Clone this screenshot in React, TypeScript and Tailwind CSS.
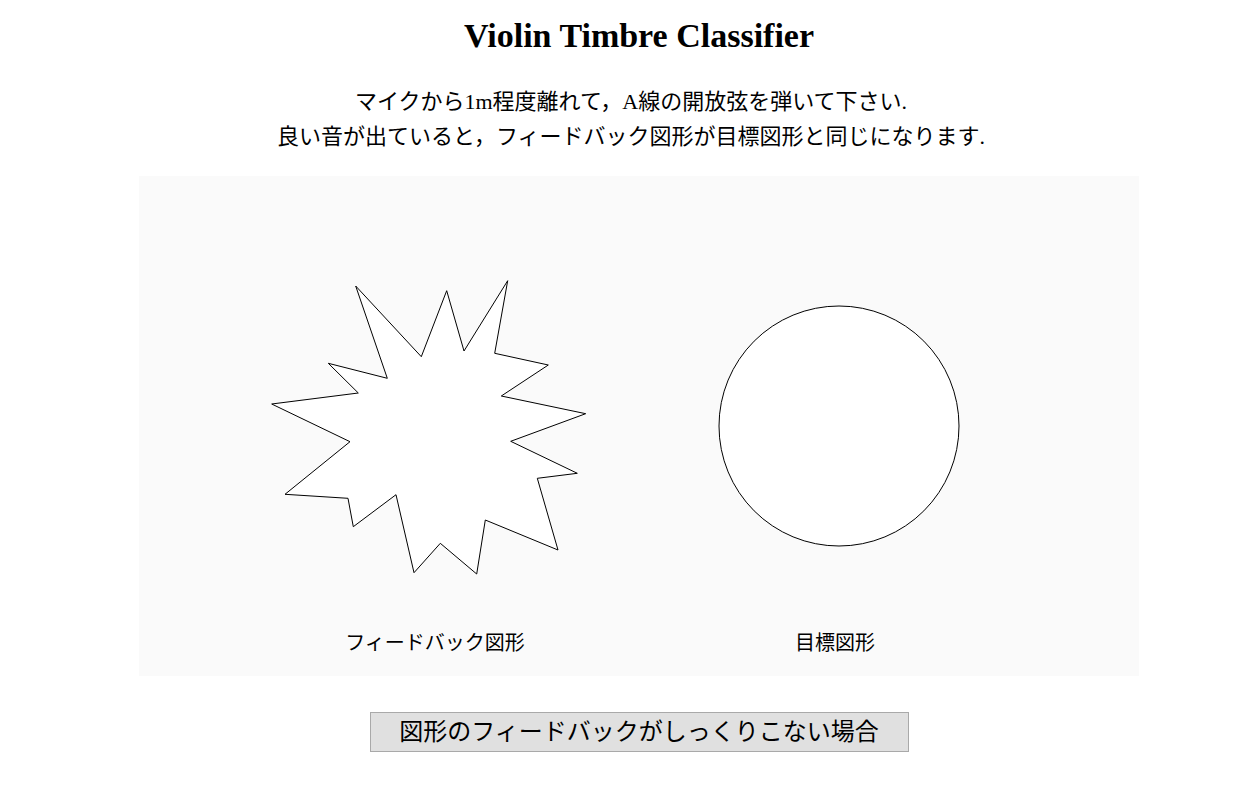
const starPoints = [
  [116.7, 60], [182.3, 130.7], [207.7, 64.7], [225, 125], [268.7, 54.7],
  [255.7, 127.3], [309.3, 139], [262.3, 170], [346.7, 187.7], [271.7, 215.3],
  [338.3, 247.3], [298.3, 252.3], [319, 324], [246.3, 294], [237.7, 348],
  [201.3, 317.3], [175, 346.7], [157, 268.7], [114.3, 300.7], [109, 272.3],
  [46, 268.3], [111, 215.7], [32.7, 178], [119.3, 167], [89.3, 137.3],
  [148.3, 152.3],
]
  .map(([x, y]) => `${x},${y}`)
  .join(" ");

function ShapeColumn({ label, children }: { label: string; children: React.ReactNode }) {
  return (
    <div className="flex w-[400px] flex-col items-center">
      <svg width="400" height="400" viewBox="0 0 400 400">
        {children}
      </svg>
      <div className="mt-[2px] pr-2 text-[20px] leading-[28px] text-black [font-family:'Noto_Sans_CJK_JP',sans-serif] font-normal">
        {label}
      </div>
    </div>
  );
}

export default function App() {
  return (
    <div className="min-h-screen w-full bg-white pl-6 text-black">
      <div className="flex flex-col items-center pt-4">
        <h1 className="h-10 text-[34px] font-bold leading-10 [font-family:'Liberation_Serif','Noto_Sans_CJK_JP',serif]">
          Violin Timbre Classifier
        </h1>
        <div className="mt-[28px] pr-4 text-center text-[22px] leading-[35px] [font-family:'Liberation_Serif','Noto_Sans_CJK_JP',serif]">
          <p>マイクから1m程度離れて，A線の開放弦を弾いて下さい.</p>
          <p>良い音が出ていると，フィードバック図形が目標図形と同じになります.</p>
        </div>
        <div className="mt-[22px] flex h-[500px] w-[1000px] justify-center bg-[#fafafa] pt-[50px]">
          <ShapeColumn label="フィードバック図形">
            <polygon points={starPoints} fill="#ffffff" stroke="#000000" strokeWidth="1" strokeLinejoin="miter" />
          </ShapeColumn>
          <ShapeColumn label="目標図形">
            <circle cx="200" cy="200" r="120" fill="#ffffff" stroke="#000000" strokeWidth="1" />
          </ShapeColumn>
        </div>
        <button className="mt-[36px] h-[40px] w-[539px] border border-[#a9a9a9] bg-[#e0e0e0] pb-1 text-[24px] leading-[32px] text-black [font-family:'Noto_Sans_CJK_JP',sans-serif] font-normal">
          図形のフィードバックがしっくりこない場合
        </button>
      </div>
    </div>
  );
}
